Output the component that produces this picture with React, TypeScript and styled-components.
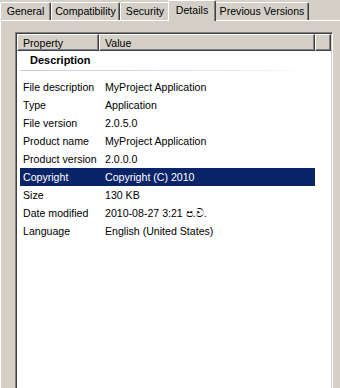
import styled, { createGlobalStyle } from "styled-components";

const GlobalStyle = createGlobalStyle`
  html, body {
    margin: 0;
    padding: 0;
    background: #d4d0c8;
    overflow: hidden;
  }
  body {
    font-family: "Liberation Sans", Arial, sans-serif;
    font-size: 10.6px;
    color: #000;
  }
`;

const tabs = [
  { label: "General", width: 51 },
  { label: "Compatibility", width: 69 },
  { label: "Security", width: 50 },
  { label: "Details", width: 45, active: true },
  { label: "Previous Versions", width: 94 },
];

const rows = [
  { name: "File description", value: "MyProject Application" },
  { name: "Type", value: "Application" },
  { name: "File version", value: "2.0.5.0" },
  { name: "Product name", value: "MyProject Application" },
  { name: "Product version", value: "2.0.0.0" },
  { name: "Copyright", value: "Copyright (C) 2010", selected: true },
  { name: "Size", value: "130 KB" },
  { name: "Date modified", value: "2010-08-27 3:21 ප.ව." },
  { name: "Language", value: "English (United States)" },
];

const App = () => (
  <Window>
    <GlobalStyle />
    <TabStrip>
      {tabs.map((t) => (
        <Tab key={t.label} $w={t.width} $active={!!t.active}>
          {t.label}
        </Tab>
      ))}
    </TabStrip>
    <Panel>
      <ListView>
        <Header>
          <HeaderCell $w={82}>Property</HeaderCell>
          <HeaderCell $w={216}>Value</HeaderCell>
          <HeaderCell $w={16} />
        </Header>
        <Group>
          <GroupTitle>Description</GroupTitle>
          <GroupLine />
        </Group>
        {rows.map((r) => (
          <Row key={r.name} $selected={!!r.selected}>
            <Label>{r.name}</Label>
            <Value>{r.value}</Value>
          </Row>
        ))}
      </ListView>
    </Panel>
  </Window>
);

const Window = styled.div`
  width: 340px;
  height: 388px;
  overflow: hidden;
`;

const TabStrip = styled.div`
  display: flex;
  align-items: flex-end;
  height: 20px;
`;

const Tab = styled.div<{ $w: number; $active: boolean }>`
  position: relative;
  box-sizing: border-box;
  width: ${({ $w, $active }) => ($active ? $w + 3 : $w)}px;
  height: ${({ $active }) => ($active ? 21 : 18)}px;
  margin: ${({ $active }) => ($active ? "0 -1px -1px -2px" : "0")};
  z-index: ${({ $active }) => ($active ? 1 : 0)};
  padding-top: ${({ $active }) => ($active ? 3 : 2)}px;
  text-align: center;
  white-space: nowrap;
  background: #d4d0c8;
  border-top: 1px solid #fff;
  border-left: 1px solid #fff;
  border-right: 1px solid #404040;
  border-radius: 2px 2px 0 0;
  box-shadow: inset -1px 0 #808080;
`;

const Panel = styled.div`
  border-top: 1px solid #fff;
  border-left: 1px solid #fff;
  padding: 11px 0 0 14px;
`;

const ListView = styled.div`
  box-sizing: border-box;
  width: 318px;
  height: 420px;
  padding: 1px;
  background: #fff;
  border-top: 1px solid #808080;
  border-left: 1px solid #808080;
  border-right: 1px solid #fff;
  border-bottom: 1px solid #fff;
  box-shadow: inset 1px 1px #404040, inset -1px -1px #d4d0c8;
`;

const Header = styled.div`
  display: flex;
  height: 17px;
`;

const HeaderCell = styled.div<{ $w: number }>`
  box-sizing: border-box;
  width: ${({ $w }) => $w}px;
  height: 17px;
  padding: 1px 0 0 5px;
  line-height: 14px;
  background: #d4d0c8;
  border-top: 1px solid #fff;
  border-left: 1px solid #fff;
  border-right: 1px solid #404040;
  border-bottom: 1px solid #404040;
  box-shadow: inset -1px -1px #808080;
  white-space: nowrap;
  overflow: hidden;
`;

const Group = styled.div`
  height: 27px;
  padding: 2px 0 0 3px;
  box-sizing: border-box;
`;

const GroupTitle = styled.div`
  padding-left: 10px;
  font-size: 11px;
  font-weight: bold;
  line-height: 14px;
`;

const GroupLine = styled.div`
  margin-top: 3px;
  width: 292px;
  height: 1px;
  background: linear-gradient(to right, #c3cde0, #dfe6f1 70%, #fff);
`;

const Row = styled.div<{ $selected: boolean }>`
  display: flex;
  align-items: center;
  width: 295px;
  height: 18px;
  margin-left: 3px;
  background: ${({ $selected }) => ($selected ? "#0a246a" : "transparent")};
  color: ${({ $selected }) => ($selected ? "#fff" : "#000")};
`;

const Label = styled.div`
  box-sizing: border-box;
  width: 85px;
  padding-left: 3px;
  white-space: nowrap;
`;

const Value = styled.div`
  flex: 1;
  white-space: nowrap;
`;

export default App;
